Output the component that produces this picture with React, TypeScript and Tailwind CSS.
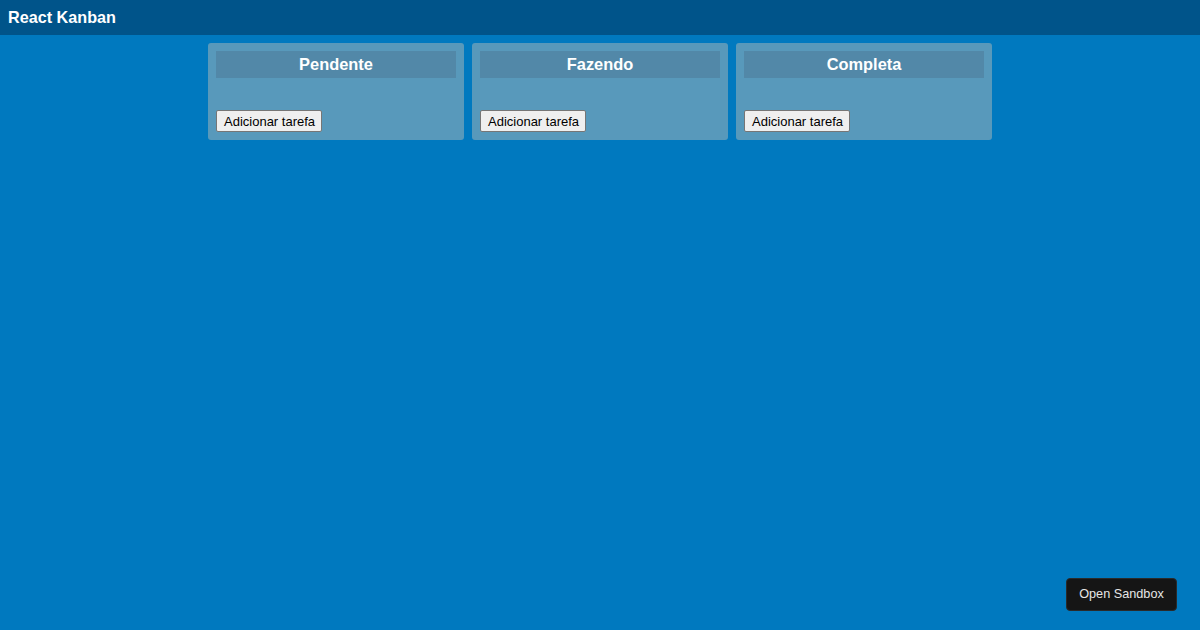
import React from "react";

const cols = ["Pendente", "Fazendo", "Completa"];

export default function App() {
  return (
    <div className="relative flex h-[630px] w-[1200px] flex-col bg-[#0079bf] font-['Liberation_Sans',Arial,sans-serif]">
      <header className="flex h-[35px] items-center bg-[#00548a] px-2">
        <h1 className="text-[16.2px] font-bold text-white">React Kanban</h1>
      </header>
      <main className="flex justify-center gap-2 pt-2">
        {cols.map((c) => (
          <section key={c} className="flex w-[256px] flex-col rounded-[3px] bg-[#5899bb] p-2">
            <h2 className="flex h-[27px] items-center justify-center bg-[#5288a8] text-[16.4px] font-bold text-white">{c}</h2>
            <div className="h-[32px]" />
            <div className="flex">
              <button className="h-[22px] rounded-[2px] border border-[#767676] bg-[#efefef] pl-[7px] pr-[6px] text-[13px] leading-none text-black">
                Adicionar tarefa
              </button>
            </div>
          </section>
        ))}
      </main>
      <button className="absolute bottom-[19px] right-[23px] h-[33px] w-[111px] rounded-[4px] border border-[#2a2a2a] bg-[#151515] text-[12.7px] text-[#e6e6e6]">
        Open Sandbox
      </button>
    </div>
  );
}
